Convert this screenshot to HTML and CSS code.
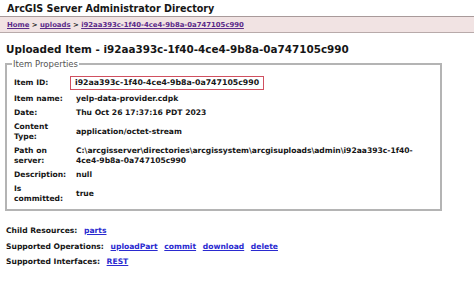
FILE: index.html
```html
<!DOCTYPE html>
<html>
<head>
<meta charset="utf-8">
<link rel="stylesheet" href="styles.css">
</head>
<body>
<div class="title">ArcGIS Server Administrator Directory</div>
<div class="crumbs"><a class="v" href="#">Home</a> &gt; <a class="v" href="#">uploads</a> &gt; <a class="v" href="#">i92aa393c-1f40-4ce4-9b8a-0a747105c990</a></div>
<h1 class="head">Uploaded Item - i92aa393c-1f40-4ce4-9b8a-0a747105c990</h1>
<fieldset class="props">
<legend>Item Properties</legend>
<table class="ptable">
<tr><td class="lab">Item ID:</td><td class="val"><span class="idbox">i92aa393c-1f40-4ce4-9b8a-0a747105c990</span></td></tr>
<tr><td class="lab">Item name:</td><td class="val">yelp-data-provider.cdpk</td></tr>
<tr><td class="lab">Date:</td><td class="val">Thu Oct 26 17:37:16 PDT 2023</td></tr>
<tr><td class="lab">Content Type:</td><td class="val">application/octet-stream</td></tr>
<tr><td class="lab">Path on server:</td><td class="val">C:\arcgisserver\directories\arcgissystem\arcgisuploads\admin\i92aa393c-1f40-4ce4-9b8a-0a747105c990</td></tr>
<tr><td class="lab">Description:</td><td class="val">null</td></tr>
<tr><td class="lab">Is committed:</td><td class="val">true</td></tr>
</table>
</fieldset>
<div class="lines">
<div class="line">Child Resources: <span class="links"><a href="#">parts</a></span></div>
<div class="line">Supported Operations: <span class="links"><a href="#">uploadPart</a> <a href="#">commit</a> <a href="#">download</a> <a href="#">delete</a></span></div>
<div class="line">Supported Interfaces: <span class="links"><a href="#">REST</a></span></div>
</div>
</body>
</html>
```
FILE: styles.css
```css
body {
  margin: 0;
  font-family: "DejaVu Sans", Verdana, sans-serif;
  font-weight: bold;
  color: #161616;
  background: #fff;
}
.title {
  font-size: 9.6px;
  padding: 2px 7px 0;
  height: 14px;
  line-height: 13px;
}
.crumbs {
  background: #f1e3e3;
  border-top: 1px solid #a89a9a;
  border-bottom: 1px solid #b8aaaa;
  font-size: 6.9px;
  height: 15px;
  line-height: 16px;
  padding: 0 7px;
}
.crumbs a.v {
  color: #5b2b8a;
}
.head {
  font-size: 10.4px;
  margin: 9px 0 0 6px;
  line-height: 15px;
}
.props {
  margin: 2px 0 0 5px;
  border: 2px solid #b4b4b4;
  padding: 5px 5px 3px 5px;
  box-sizing: border-box;
  width: 437px;
}
.props legend {
  font-weight: normal;
  font-size: 8.5px;
  color: #555;
  padding: 0 1px;
  margin-left: 0;
}
.ptable {
  border-collapse: separate;
  border-spacing: 0;
  font-size: 7.6px;
}
.ptable td {
  padding: 2px 2px;
  line-height: 10px;
  vertical-align: middle;
}
.lab {
  width: 54px;
}
.val {
  padding-left: 6px !important;
}
.idbox {
  display: inline-block;
  border: 1.5px solid #d05060;
  padding: 1px 4px;
  margin-left: -6px;
  line-height: 10px;
  font-size: 7.8px;
}
.lines {
  margin: 12px 0 0 6px;
}
.line {
  font-size: 7.6px;
  line-height: 15.5px;
}
.links {
  margin-left: 4px;
}
.links a {
  color: #2a2ad0;
  margin-right: 4px;
}
```
